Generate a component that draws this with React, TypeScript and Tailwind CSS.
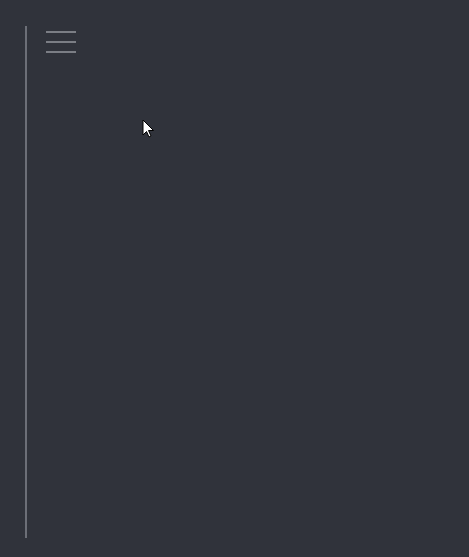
export default function App() {
  return (
    <div className="relative w-[469px] h-[557px] bg-[#30333b] overflow-hidden">
      <div className="flex h-full pt-[26px] pb-[19px] pl-[25px]">
        <div className="w-[2px] h-full bg-[#6c6f77]" />
        <div className="flex flex-col gap-[8px] pl-[19px] pt-[5px]">
          <div className="w-[30px] h-[2px] bg-[#7b7e85]" />
          <div className="w-[30px] h-[2px] bg-[#7b7e85]" />
          <div className="w-[30px] h-[2px] bg-[#7b7e85]" />
        </div>
      </div>
      <svg className="absolute left-[142px] top-[119px]" width="14" height="20" viewBox="0 0 14 20">
        <path d="M1 1 L1 16 L4.5 12.5 L7 18 L9 17 L6.5 11.5 L11.5 11.5 Z" fill="#ffffff" stroke="#000000" strokeWidth="1" />
      </svg>
    </div>
  );
}
